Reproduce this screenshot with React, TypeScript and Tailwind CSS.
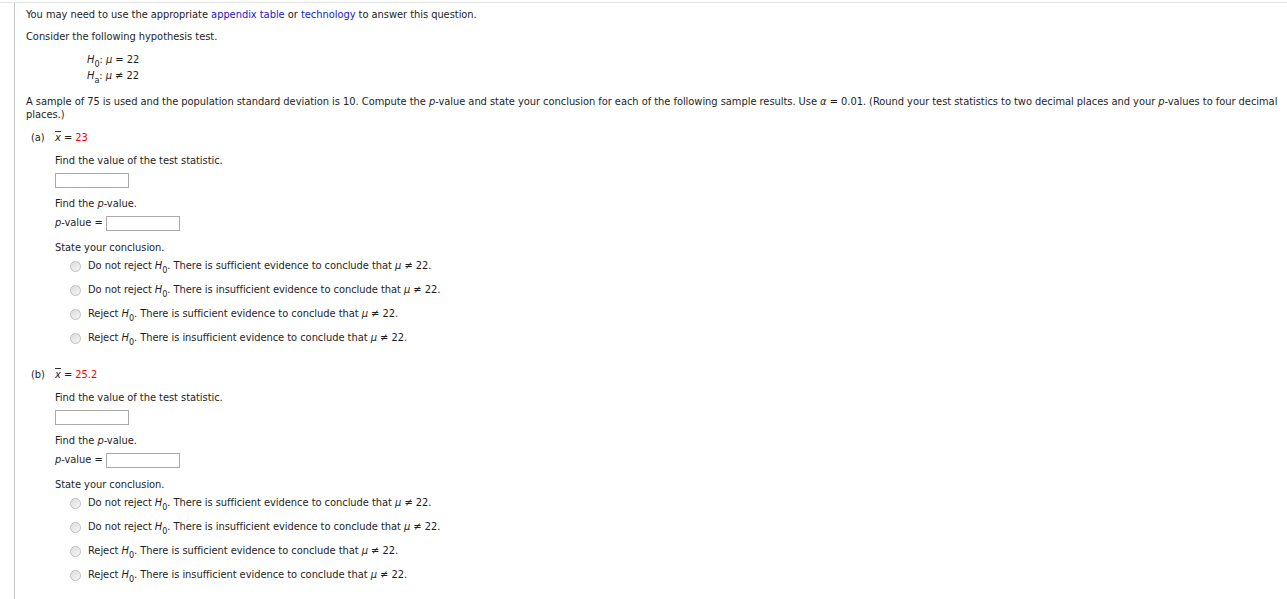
import React from "react";

const H0 = ({ sub = "0" }: { sub?: string }) => (
  <span className="whitespace-nowrap">
    <i>H</i>
    <sub className="text-[9px] relative top-[1px] align-sub leading-none">{sub}</sub>
  </span>
);

const Mu = () => <i>μ</i>;

const XBar = () => (
  <i className="relative inline-block">
    <span className="absolute left-[0px] right-[0px] top-[0px] border-t border-[#333]"></span>
    x
  </i>
);

const Radio = () => (
  <span className="inline-block w-[11px] h-[11px] rounded-full border border-[#c0c0c0] bg-gradient-to-br from-[#dcdcdc] to-[#f6f6f6] shrink-0"></span>
);

const Input = () => (
  <span className="inline-block w-[74px] h-[15px] border border-[#a9a9a9] bg-white align-middle"></span>
);

const options = [
  { pre: "Do not reject ", post: ". There is sufficient evidence to conclude that " },
  { pre: "Do not reject ", post: ". There is insufficient evidence to conclude that " },
  { pre: "Reject ", post: ". There is sufficient evidence to conclude that " },
  { pre: "Reject ", post: ". There is insufficient evidence to conclude that " },
];

const Part = ({ label, value }: { label: string; value: string }) => (
  <div>
    <div className="flex items-center h-[13px] pl-[5px]">
      <span className="w-[24px]">{label}</span>
      <span>
        <XBar /> = <span className="text-[#ff0000]">{value}</span>
      </span>
    </div>
    <div className="pl-[29px]">
      <div className="mt-[10px] h-[13px]">Find the value of the test statistic.</div>
      <div className="mt-[6px] h-[15px] flex">
        <Input />
      </div>
      <div className="mt-[9px] h-[13px]">
        Find the <i>p</i>-value.
      </div>
      <div className="mt-[6px] h-[15px] flex items-center">
        <span className="relative top-[-1px]">
          <i>p</i>-value =&nbsp;
        </span>
        <Input />
      </div>
      <div className="mt-[10px] h-[13px]">State your conclusion.</div>
      <div className="mt-[6px] flex flex-col gap-[11px] pl-[15px]">
        {options.map((o, i) => (
          <div key={i} className="flex items-center h-[13px]">
            <Radio />
            <span className="ml-[7px] whitespace-nowrap">
              {o.pre}
              <H0 />
              {o.post}
              <Mu /> ≠ 22.
            </span>
          </div>
        ))}
      </div>
    </div>
  </div>
);

export default function App() {
  return (
    <div className="bg-white min-h-[599px] pt-[2px] text-[11px] leading-[13px] tracking-[-0.04px] text-[#1e1e1e] font-['DejaVu_Sans_Condensed','DejaVu_Sans',sans-serif]">
      <div className="border-t border-[#e3e3e3]">
        <div className="ml-[14px] border-l border-[#c8c8c8] min-h-[596px] pl-[11px] pt-[5px]">
          <div className="h-[13px]">
            You may need to use the appropriate{" "}
            <span className="text-[#2020d0]">appendix table</span> or{" "}
            <span className="text-[#2020d0]">technology</span> to answer this question.
          </div>
          <div className="mt-[9px] h-[13px]">Consider the following hypothesis test.</div>
          <div className="mt-[10px] pl-[61px]">
            <div className="h-[16px]">
              <H0 />: <Mu /> = 22
            </div>
            <div className="h-[16px]">
              <H0 sub="a" />: <Mu /> ≠ 22
            </div>
          </div>
          <div className="mt-[10px] whitespace-nowrap">
            A sample of 75 is used and the population standard deviation is 10. Compute the <i>p</i>-value and state your
            conclusion for each of the following sample results. Use <i>α</i> = 0.01. (Round your test statistics to two
            decimal places and your <i>p</i>-values to four decimal
            <br />
            places.)
          </div>
          <div className="mt-[10px]">
            <Part label="(a)" value="23" />
          </div>
          <div className="mt-[23px]">
            <Part label="(b)" value="25.2" />
          </div>
        </div>
      </div>
    </div>
  );
}
